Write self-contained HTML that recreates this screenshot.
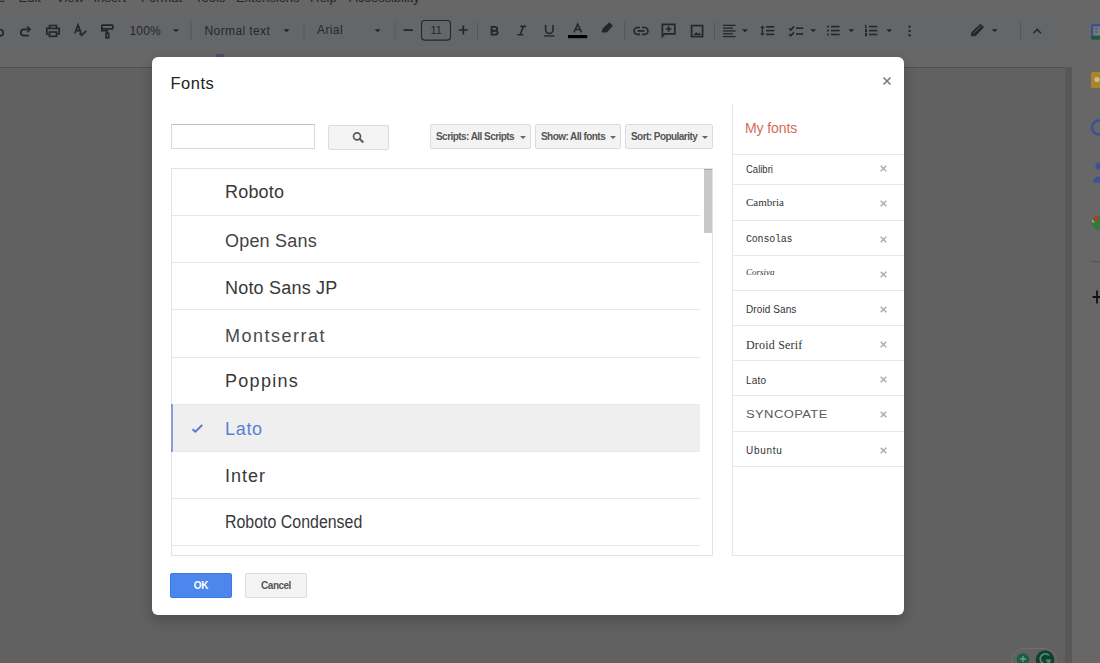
<!DOCTYPE html>
<html><head><meta charset="utf-8">
<style>
*{margin:0;padding:0;box-sizing:border-box}
html,body{width:1100px;height:663px;overflow:hidden;background:#616161;font-family:"Liberation Sans",sans-serif}
.a{position:absolute}
#hdr{left:0;top:0;width:1072px;height:67px;background:#676767}
#hdrline{left:0;top:67px;width:1065px;height:1px;background:#4f4f4f}
#pill{left:-20px;top:14px;width:1080px;height:33px;border-radius:7px;background:#656669}
#vscroll{left:1065px;top:67px;width:7px;height:596px;background:#585858}
#side{left:1072px;top:0;width:28px;height:663px;background:#676767}
.tb{color:#262626;font-size:14px}
.sep{width:1px;height:18px;top:22px;background:#4f5052}
.dd{width:0;height:0;border-left:3.5px solid transparent;border-right:3.5px solid transparent;border-top:4px solid #262626;top:29px}

#dlg{left:152px;top:57px;width:752px;height:558px;background:#fff;border-radius:6px;box-shadow:0 5px 14px rgba(0,0,0,.22)}
#title{left:18.5px;top:17px;font-size:16.5px;color:#222;letter-spacing:0.5px}
#close{left:728px;top:17px}
#search{left:19px;top:67px;width:144px;height:25px;border:1px solid #d9d9d9;border-top-color:#c0c0c0}
#sbtn{left:176px;top:68px;width:61px;height:25px;border:1px solid #dcdcdc;background:#f3f3f3;border-radius:2px}
.ddbtn{top:67px;height:25px;border:1px solid #dcdcdc;background:#f3f3f3;border-radius:2px;font-size:10px;font-weight:bold;color:#555;line-height:23px;padding-left:5px;white-space:nowrap;letter-spacing:-0.55px}
.ddbtn i{position:absolute;top:10.5px;width:0;height:0;border-left:3px solid transparent;border-right:3px solid transparent;border-top:3px solid #666}
#list{left:19px;top:111px;width:542px;height:388px;border:1px solid #e4e4e4;overflow:hidden}
.row{position:absolute;left:0;width:528px;height:47px;border-bottom:1px solid #e8e8e8}
.row span{position:absolute;left:53px;font-size:18px;color:#383838;white-space:nowrap}
#sb{left:532px;top:0px;width:8px;height:64px;background:#c8c8c8;border-top:1px solid #aaa}
#my{left:580px;top:47px;width:172px;height:452px;border-left:1px solid #e6e6e6;border-bottom:1px solid #e6e6e6}
#myt{left:12px;top:16px;font-size:14px;color:#d56a5a;letter-spacing:-0.1px}
.mrow{position:absolute;left:0;width:171px;border-top:1px solid #e8e8e8}
.mrow span{position:absolute;left:13px;font-size:10px;color:#333;white-space:nowrap}
.mrow b{position:absolute;left:145px;font-weight:normal}
#ok{left:18px;top:516px;width:62px;height:25px;background:#4d86ec;border:1px solid #3f78e0;border-radius:2px;color:#fff;font-weight:bold;font-size:10px;text-align:center;line-height:23px;letter-spacing:-0.3px}
#cancel{left:93px;top:516px;width:62px;height:25px;background:#f3f3f3;border:1px solid #dcdcdc;border-radius:2px;color:#555;font-weight:bold;font-size:10px;text-align:center;line-height:23px;letter-spacing:-0.5px}
</style></head><body>
<div id="hdr" class="a"></div>
<div id="pill" class="a"></div>
<div id="hdrline" class="a"></div>
<div id="vscroll" class="a"></div>
<div id="side" class="a"></div>
<svg class="a" style="left:0;top:0" width="1100" height="67" viewBox="0 0 1100 67">
<g fill="none" stroke="#252627" stroke-width="1.7" stroke-linecap="butt">
<!-- undo partial -->
<path d="M-3 29.5h3a3.2 3.2 0 0 1 0 6.4h-3"/>
<!-- redo -->
<path d="M30 29.3h-6a3.2 3.2 0 0 0 0 6.4h5"/><path d="M27.3 26.6l2.7 2.7-2.7 2.7"/>
<!-- print -->
<path d="M49.5 28v-2.5h7v2.5"/><path d="M49 34h-2.2v-5.6h12.4v5.6h-2.2"/><rect x="49.5" y="32" width="7" height="4.3"/>
<!-- spellcheck -->
<path d="M74.8 33.5l3.2-8.6 3.2 8.6M76 30.6h4"/><path d="M79.5 33.2l2.2 2.2 4.6-4.6"/>
<!-- paint format -->
<rect x="101.8" y="25.2" width="11" height="3.6" rx="0.5"/><path d="M101.8 27v3.6h5.5v2.5"/><rect x="106" y="33.2" width="2.6" height="4.6"/>
<!-- minus plus -->
<path d="M403.5 30.2h9.4M458.8 30h9M463.3 25.6v8.8"/>
<!-- link -->
<path d="M640 27.5h-2.5a3.4 3.4 0 0 0 0 6.8h2.5M642 27.5h2.5a3.4 3.4 0 0 1 0 6.8h-2.5M637.5 30.9h7"/>
<!-- comment -->
<path d="M662.4 36.3v-12h12.4v9.6h-10.2z"/><path d="M668.6 26.2v5.6M665.8 29h5.6"/>
<!-- image -->
<rect x="691.6" y="25.6" width="11" height="11"/>
<!-- pen highlight -->
<path d="M602 32l1.2-3.6 6.2-5.6 3 3-5.6 6.2z" fill="#252627" stroke-width="1"/>
<!-- pencil -->
<path d="M971.2 35.8l0.8-3.6 8.6-8 2.9 2.9-8 8.6z" fill="#252627" stroke-width="1"/><path d="M973.6 33.4l7.8-7.6" stroke="#5d5f62" stroke-width="0.9"/>
</g>
<g fill="#252627">
<path d="M693.6 35l2.6-3 1.8 2 1.4-1.4 2 2.4z"/>
<rect x="568" y="35" width="19.2" height="3.2" fill="#000"/>
<rect x="723" y="24.7" width="12.6" height="1.3"/><rect x="723" y="27.5" width="10" height="1.3"/><rect x="723" y="30.3" width="12.6" height="1.3"/><rect x="723" y="33.1" width="10" height="1.3"/><rect x="723" y="35.9" width="12.6" height="1.3"/>
<!-- line spacing -->
<rect x="766" y="26" width="8.2" height="1.6"/><rect x="766" y="29.8" width="8.2" height="1.6"/><rect x="766" y="33.6" width="8.2" height="1.6"/>
<path d="M760 28l2.4-2.5 2.4 2.5zM760 33.2l2.4 2.5 2.4-2.5z"/><rect x="761.7" y="27.5" width="1.4" height="6"/>
<!-- checklist -->
<rect x="796" y="27.4" width="7.2" height="1.6"/><rect x="796" y="33.2" width="7.2" height="1.6"/>
<!-- bulleted -->
<circle cx="828" cy="26.6" r="1.05"/><circle cx="828" cy="30.6" r="1.05"/><circle cx="828" cy="34.5" r="1.05"/>
<rect x="831" y="25.8" width="8.6" height="1.6"/><rect x="831" y="29.8" width="8.6" height="1.6"/><rect x="831" y="33.7" width="8.6" height="1.6"/>
<!-- numbered -->
<rect x="865" y="24.8" width="1.4" height="3.6"/><rect x="865" y="29.2" width="2" height="3"/><rect x="865" y="33" width="2" height="3.3"/>
<rect x="869" y="25.8" width="8.3" height="1.6"/><rect x="869" y="29.8" width="8.3" height="1.6"/><rect x="869" y="33.7" width="8.3" height="1.6"/>
<circle cx="909.6" cy="26.6" r="1.2"/><circle cx="909.6" cy="30.9" r="1.2"/><circle cx="909.6" cy="35.2" r="1.2"/>
<path d="M173 29.3h6l-3 3z" fill="#252627"/><path d="M283.5 29.3h6l-3 3z" fill="#252627"/><path d="M374.7 29.3h6l-3 3z" fill="#252627"/><path d="M742 29.3h6l-3 3z" fill="#252627"/><path d="M810.2 29.3h6l-3 3z" fill="#252627"/><path d="M848.4 29.3h6l-3 3z" fill="#252627"/><path d="M886.2 29.3h6l-3 3z" fill="#252627"/><path d="M991.7 29.3h6l-3 3z" fill="#252627"/>
</g>
<g fill="none" stroke="#252627" stroke-width="1.6">
<path d="M789 28.2l1.8 1.8 3.2-3.6M789 34l1.8 1.8 3.2-3.6"/>
<path d="M1033.4 33.2l3.8-3.8 3.8 3.8" stroke-width="1.5"/>
<rect x="421.5" y="20.5" width="29" height="19.6" rx="3" stroke-width="1.1"/>
<path d="M545.6 25v4.8a3.7 3.7 0 0 0 7.4 0v-4.8"/><path d="M544.2 35.9h10.3" stroke-width="1.4"/>
</g>
<g fill="#252627" stroke="none">
<path d="M596 22.4z"/>
</g>
<rect x="190.5" y="22" width="1" height="18" fill="#55575a"/><rect x="303.5" y="22" width="1" height="18" fill="#55575a"/><rect x="394.5" y="22" width="1" height="18" fill="#55575a"/><rect x="477" y="22" width="1" height="18" fill="#55575a"/><rect x="624" y="22" width="1" height="18" fill="#55575a"/><rect x="714" y="22" width="1" height="18" fill="#55575a"/><rect x="1020" y="22" width="1" height="18" fill="#55575a"/>
<g font-family="Liberation Sans" fill="#252627">
<text x="129.5" y="35" font-size="12" letter-spacing="0.2">100%</text>
<text x="204.5" y="34.6" font-size="12" letter-spacing="0.4">Normal text</text>
<text x="317" y="34.3" font-size="12" letter-spacing="0.4">Arial</text>
<text x="430.5" y="34.3" font-size="11">11</text>
<path d="M491.6 26.9h3.6a2 2 0 0 1 0 4h-3.6zM491.6 30.6h4a2 2 0 0 1 0 4h-4z" fill="none" stroke="#252627" stroke-width="1.8"/>
<path d="M520.3 26.4h5.8M517.4 34.8h5.8M523.3 26.4l-3 8.4" fill="none" stroke="#252627" stroke-width="1.6"/>
<path d="M573.9 32.3l3.8-8.2 3.8 8.2M575.3 29.5h4.8" fill="none" stroke="#252627" stroke-width="1.6"/>
<text x="-2" y="2.3" font-size="13">e</text><text x="18.5" y="2.3" font-size="13">Edit</text><text x="56" y="2.3" font-size="13">View</text><text x="93.5" y="2.3" font-size="13">Insert</text><text x="141" y="2.3" font-size="13">Format</text><text x="195" y="2.3" font-size="13">Tools</text><text x="236" y="2.3" font-size="13">Extensions</text><text x="310" y="2.3" font-size="13">Help</text><text x="349" y="2.3" font-size="13">Accessibility</text>
</g>
</svg>
<svg class="a" style="left:1072px;top:0" width="28" height="663" viewBox="1072 0 28 663">
<rect x="1091" y="24" width="12" height="15.5" rx="1.5" fill="#3a5390"/><rect x="1091" y="36" width="12" height="3.5" fill="#22583a"/><rect x="1093.3" y="26.5" width="8" height="9" fill="#777a7f"/><path d="M1095 29h3M1095 32h3" stroke="#3d4a66" stroke-width="1"/>
<rect x="1091" y="72" width="12" height="16" rx="1.5" fill="#a8852a"/><circle cx="1097" cy="79.5" r="2.6" fill="#c8bc98"/>
<circle cx="1099" cy="127.5" r="7" fill="none" stroke="#3a5394" stroke-width="2.6"/>
<circle cx="1099" cy="166" r="3.5" fill="#3a5394"/><path d="M1093 182.5a6 6 0 0 1 12 0z" fill="#3a5394"/>
<path d="M1098 216a6.5 6.5 0 0 1 6.5 6.5c0 3-3 6-6.5 8.5c-3.5-2.5-6.5-5.5-6.5-8.5a6.5 6.5 0 0 1 6.5-6.5z" fill="#2f7a3e"/><path d="M1093 219a6.5 6.5 0 0 1 5-3v6z" fill="#b33"/><path d="M1092 222.5v-3.5l3 3.5z" fill="#c9a227"/>
<rect x="1091" y="261" width="10" height="1" fill="#555"/>
<path d="M1092.6 297h8M1097 290.5v13" stroke="#111" stroke-width="1.8"/>
</svg>
<svg class="a" style="left:1000px;top:640px" width="65" height="23" viewBox="1000 640 65 23">
<rect x="1011.5" y="648.5" width="45" height="30" rx="13" fill="none" stroke="#6f6f6f" stroke-width="1"/>
<circle cx="1023" cy="659.5" r="6.3" fill="#1b5e45"/><path d="M1023 656v6M1020 659h6" stroke="#6e9c88" stroke-width="1.4"/><circle cx="1045" cy="659.5" r="9.2" fill="#10402e"/><path d="M1049 655.5a5 5 0 1 0 1 5h-4" fill="none" stroke="#4f8a72" stroke-width="1.8"/>
</svg>

<div class="a" style="left:216px;top:54px;width:8px;height:3px;background:#4b5264"></div>
<div id="dlg" class="a">
  <div id="title" class="a">Fonts</div>
  <div id="close" class="a"><svg width="14" height="14" viewBox="0 0 14 14"><path d="M3.5 3.5L10.5 10.5M10.5 3.5L3.5 10.5" stroke="#7a7a7a" stroke-width="1.6"/></svg></div>
  <div id="search" class="a"></div>
  <div id="sbtn" class="a"><svg class="a" style="left:22px;top:4px" width="14" height="14" viewBox="0 0 14 14"><circle cx="6" cy="6.3" r="3.5" fill="none" stroke="#5a5a5a" stroke-width="1.7"/><path d="M8.5 8.8L12.3 12.5" stroke="#5a5a5a" stroke-width="2.1"/></svg></div>
  <div class="ddbtn a" style="left:278px;width:101px">Scripts: All Scripts<i style="left:88.6px"></i></div>
  <div class="ddbtn a" style="left:383px;width:86px">Show: All fonts<i style="left:73.7px"></i></div>
  <div class="ddbtn a" style="left:473px;width:88px">Sort: Popularity<i style="left:75.6px"></i></div>
  <div id="list" class="a">
    <div class="row" style="top:0"><span style="top:13px;letter-spacing:0.2px">Roboto</span></div>
    <div class="row" style="top:47px"><span style="top:14.5px;letter-spacing:0.2px;color:#444">Open Sans</span></div>
    <div class="row" style="top:94px"><span style="top:14.5px;letter-spacing:0.2px">Noto Sans JP</span></div>
    <div class="row" style="top:142px"><span style="top:15px;letter-spacing:1.5px;color:#4a4a4a">Montserrat</span></div>
    <div class="row" style="top:189px"><span style="top:13px;letter-spacing:1.3px">Poppins</span></div>
    <div class="row" style="top:236px;background:#efefef"><span style="top:14px;left:53px;color:#5a80d6;letter-spacing:0.7px">Lato</span>
      <svg class="a" style="left:17.5px;top:17px" width="14" height="12" viewBox="0 0 14 12"><path d="M2.5 7.2l2.8 2.4 7-6.6" fill="none" stroke="#5a78cc" stroke-width="1.9"/></svg></div>
    <div class="row" style="top:283px"><span style="top:14px;letter-spacing:1px">Inter</span></div>
    <div class="row" style="top:330px"><span style="top:13px;transform:scaleX(0.885);transform-origin:0 0">Roboto Condensed</span></div>
    <div class="row" style="top:377px"></div>
    <div id="sb" class="a"></div>
  </div>
  <div id="my" class="a">
    <div id="myt" class="a">My fonts</div>
    <div class="mrow" style="top:50px;height:30px"><span style="top:8.5px;font-size:10px;transform:scaleX(0.95);transform-origin:0 0">Calibri</span><svg class="a" style="left:146px;top:9px" width="9" height="9" viewBox="0 0 9 9"><path d="M1.7 1.7L7.3 7.3M7.3 1.7L1.7 7.3" stroke="#b0b0b0" stroke-width="1.6"/></svg></div>
    <div class="mrow" style="top:80px;height:36px"><span style="top:10.5px;font-family:'Liberation Serif';font-size:11px">Cambria</span><svg class="a" style="left:146px;top:14px" width="9" height="9" viewBox="0 0 9 9"><path d="M1.7 1.7L7.3 7.3M7.3 1.7L1.7 7.3" stroke="#b0b0b0" stroke-width="1.6"/></svg></div>
    <div class="mrow" style="top:116px;height:35px"><span style="top:13.4px;font-family:'Liberation Mono';font-size:10px;letter-spacing:-0.2px">Consolas</span><svg class="a" style="left:146px;top:14px" width="9" height="9" viewBox="0 0 9 9"><path d="M1.7 1.7L7.3 7.3M7.3 1.7L1.7 7.3" stroke="#b0b0b0" stroke-width="1.6"/></svg></div>
    <div class="mrow" style="top:151px;height:35px"><span style="top:10.7px;font-family:'Liberation Serif';font-style:italic;font-size:9px">Corsiva</span><svg class="a" style="left:146px;top:14px" width="9" height="9" viewBox="0 0 9 9"><path d="M1.7 1.7L7.3 7.3M7.3 1.7L1.7 7.3" stroke="#b0b0b0" stroke-width="1.6"/></svg></div>
    <div class="mrow" style="top:186px;height:35px"><span style="top:12.9px;font-size:10px;letter-spacing:0.1px">Droid Sans</span><svg class="a" style="left:146px;top:14px" width="9" height="9" viewBox="0 0 9 9"><path d="M1.7 1.7L7.3 7.3M7.3 1.7L1.7 7.3" stroke="#b0b0b0" stroke-width="1.6"/></svg></div>
    <div class="mrow" style="top:221px;height:35px"><span style="top:11.5px;font-family:'Liberation Serif';font-size:12px;letter-spacing:0.2px">Droid Serif</span><svg class="a" style="left:146px;top:14px" width="9" height="9" viewBox="0 0 9 9"><path d="M1.7 1.7L7.3 7.3M7.3 1.7L1.7 7.3" stroke="#b0b0b0" stroke-width="1.6"/></svg></div>
    <div class="mrow" style="top:256px;height:35px"><span style="top:14.4px;font-size:10px;letter-spacing:0.2px">Lato</span><svg class="a" style="left:146px;top:14px" width="9" height="9" viewBox="0 0 9 9"><path d="M1.7 1.7L7.3 7.3M7.3 1.7L1.7 7.3" stroke="#b0b0b0" stroke-width="1.6"/></svg></div>
    <div class="mrow" style="top:291px;height:36px"><span style="top:13px;font-size:10px;letter-spacing:0.3px;transform:scaleX(1.3);transform-origin:0 0;color:#5a5a5a">SYNCOPATE</span><svg class="a" style="left:146px;top:14px" width="9" height="9" viewBox="0 0 9 9"><path d="M1.7 1.7L7.3 7.3M7.3 1.7L1.7 7.3" stroke="#b0b0b0" stroke-width="1.6"/></svg></div>
    <div class="mrow" style="top:327px;height:35px"><span style="top:12.6px;font-size:10px;letter-spacing:0.7px">Ubuntu</span><svg class="a" style="left:146px;top:14px" width="9" height="9" viewBox="0 0 9 9"><path d="M1.7 1.7L7.3 7.3M7.3 1.7L1.7 7.3" stroke="#b0b0b0" stroke-width="1.6"/></svg></div>
    <div class="mrow" style="top:362px;height:1px"></div>
  </div>
  <div class="a" style="left:19px;top:347px;width:2px;height:48px;background:#8a9fd9"></div>
  <div id="ok" class="a">OK</div>
  <div id="cancel" class="a">Cancel</div>
</div>
</body></html>
